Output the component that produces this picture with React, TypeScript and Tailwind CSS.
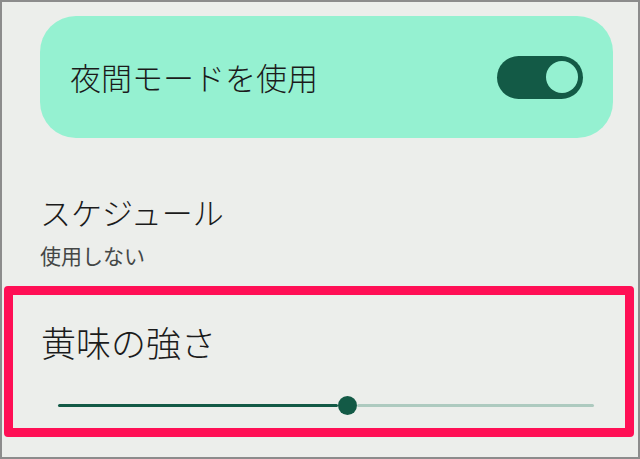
const App = () => {
  return (
    <div
      className="w-[640px] h-[459px] border-2 border-[#8c8c8c] bg-[#eceeeb] flex flex-col overflow-hidden"
      style={{ fontFamily: '"Noto Sans CJK JP", "Noto Sans", sans-serif' }}
    >
      {/* Night mode card */}
      <div className="ml-[38px] mt-[14px] w-[573px] h-[122px] shrink-0 rounded-[36px] bg-[#95f1d1] flex items-center justify-between pl-[30px] pr-[30px]">
        <span className="text-[31px] leading-[36px] font-light text-[#1b1b1b]">夜間モードを使用</span>
        <div className="w-[86px] h-[43px] rounded-full bg-[#135a46] flex items-center justify-end pr-[5px]">
          <div className="w-[32px] h-[32px] rounded-full bg-[#95f1d1]" />
        </div>
      </div>

      {/* Schedule */}
      <div className="ml-[38px] mt-[56px] flex flex-col">
        <span className="text-[31px] leading-[36px] font-light text-[#1b1b1b]">スケジュール</span>
        <span className="mt-[11px] text-[21px] leading-[28px] text-[#444746]">使用しない</span>
      </div>

      {/* Highlighted intensity slider */}
      <div className="ml-[2px] mt-[17px] w-[630px] h-[151px] shrink-0 border-[9px] border-[#ff0f55] rounded-[4px] flex flex-col pl-[28px] pt-[27px]">
        <span className="text-[35px] leading-[40px] font-light text-[#1b1b1b]">黄味の強さ</span>
        <div className="mt-[34px] ml-[17px] w-[536px] h-[19px] flex items-center">
          <div className="w-[280px] h-[3px] rounded-full bg-[#135a46]" />
          <div className="w-[19px] h-[19px] rounded-full bg-[#135a46] shrink-0" />
          <div className="flex-1 h-[3px] rounded-full bg-[#adcabf]" />
        </div>
      </div>
    </div>
  );
};

export default App;
